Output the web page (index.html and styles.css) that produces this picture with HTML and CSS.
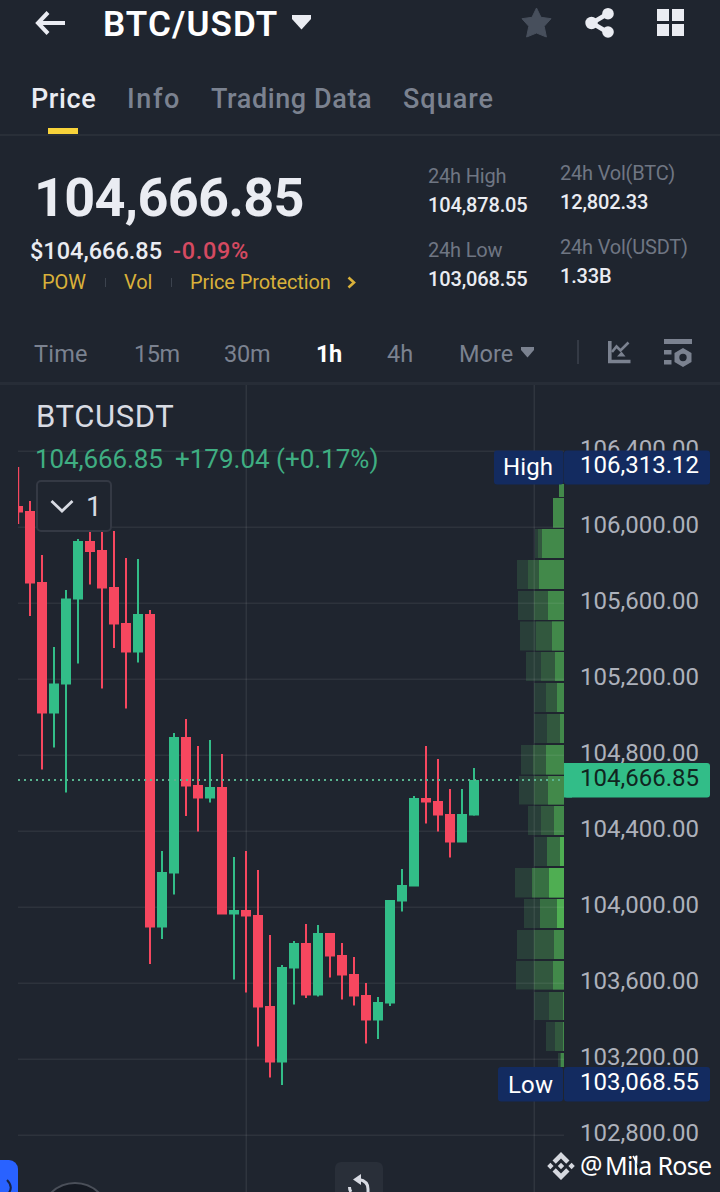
FILE: index.html
```html
<!DOCTYPE html>
<html lang="en">
<head>
    <meta charset="UTF-8">
    <meta name="viewport" content="width=device-width, initial-scale=1.0">
    <title>BTC/USDT</title>
    <link rel="stylesheet" href="styles.css">
</head>
<body>
    <header class="header">
        <svg class="back" width="30" height="24" viewBox="0 0 30 24">
            <path d="M13 1.5 L3 12 L13 22.5 M3.5 12 H30" fill="none" stroke="#eaecf2" stroke-width="4"/>
        </svg>
        <h1>BTC/USDT</h1>
        <svg class="caret" width="19" height="15" viewBox="0 0 19 15">
            <path d="M0 0 H19 V4 L9.5 14.5 L0 4 Z" fill="#eaecf2"/>
        </svg>
        <div class="actions">
            <svg width="31" height="31" viewBox="0 0 31 31">
                <path d="M15.5 1 L20 10.3 L30 11.7 L23.2 19.3 L25.4 30 L15.5 26 L5.6 30 L7.8 19.3 L1 11.7 L11 10.3 Z" fill="#474f5c" stroke="#474f5c" stroke-linejoin="round"/>
            </svg>
            <svg class="share" width="30" height="32" viewBox="0 0 30 32">
                <path d="M23 6.5 L7 16 L23 25.5" fill="none" stroke="#eaecf2" stroke-width="4.5"/>
                <circle cx="6.5" cy="16" r="6.2" fill="#eaecf2"/>
                <circle cx="23" cy="6.7" r="5.8" fill="#eaecf2"/>
                <circle cx="23" cy="25" r="5.8" fill="#eaecf2"/>
            </svg>
            <svg class="grid" width="27" height="27" viewBox="0 0 27 27">
                <path d="M0 0h12v12H0z M15 0h12v12H15z M0 15h12v12H0z M15 15h12v12H15z" fill="#eaecf2"/>
            </svg>
        </div>
    </header>

    <nav class="tabs">
        <a class="tab tab-price active">Price</a>
        <a class="tab tab-info">Info</a>
        <a class="tab tab-data">Trading Data</a>
        <a class="tab tab-square">Square</a>
    </nav>

    <section class="ticker">
        <div class="quote">
            <div class="last">104,666.85</div>
            <div class="fiat"><span>$104,666.85</span><span class="change">-0.09%</span></div>
            <div class="tags">
                <span class="tag-pow">POW</span><i></i><span class="tag-vol">Vol</span><i></i><span class="tag-protect">Price Protection</span>
                <svg width="9" height="13" viewBox="0 0 9 13"><path d="M1.5 1.5 L7 6.5 L1.5 11.5" fill="none" stroke="#d9b13a" stroke-width="2.6"/></svg>
            </div>
        </div>
        <dl class="stats">
            <dt>24h High</dt><dd>104,878.05</dd>
            <dt>24h Low</dt><dd>103,068.55</dd>
        </dl>
        <dl class="stats stats-vol">
            <dt>24h Vol(BTC)</dt><dd>12,802.33</dd>
            <dt>24h Vol(USDT)</dt><dd>1.33B</dd>
        </dl>
    </section>

    <div class="intervals">
        <span class="int-time">Time</span>
        <span class="int-15">15m</span>
        <span class="int-30">30m</span>
        <span class="int-1h active">1h</span>
        <span class="int-4h">4h</span>
        <span class="int-more">More</span>
        <svg class="more-caret" width="13" height="11" viewBox="0 0 13 11"><path d="M0 0H13V3L6.5 10.5L0 3Z" fill="#7b8290"/></svg>
        <i class="split"></i>
        <svg class="ind" width="23" height="23" viewBox="0 0 23 23">
            <path d="M1.8 0 V20.5 H22.5" fill="none" stroke="#7b8290" stroke-width="3.6"/>
            <path d="M4 11 L8.5 5.5 L12.5 9.5 L20.5 1.5" fill="none" stroke="#7b8290" stroke-width="2.6"/>
            <path d="M9 15.5 L13.5 10.5 L17.5 15.5 Z" fill="#7b8290"/>
        </svg>
        <svg class="settings" width="29" height="29" viewBox="0 0 29 29">
            <path d="M0 0h28v5H0z M0 11h7.5v4.5H0z M0 21h7.5v4.5H0z" fill="#7b8290"/>
            <path d="M19 9 L27.5 14 V23 L19 28 L10.5 23 V14 Z M19 14.8 A3.7 3.7 0 1 0 19 22.2 A3.7 3.7 0 1 0 19 14.8 Z" fill="#7b8290" fill-rule="evenodd"/>
        </svg>
    </div>

    <main class="chart">
        <svg id="chart" width="720" height="807" viewBox="0 385 720 807"></svg>
        <div class="legend">
            <div class="symbol">BTCUSDT</div>
            <div class="values"><span class="v-price">104,666.85</span><span class="v-diff">+179.04</span><span class="v-pct">(+0.17%)</span></div>
            <div class="toggle">
                <svg width="24" height="14" viewBox="0 0 24 14"><path d="M1.5 2 L12 12 L22.5 2" fill="none" stroke="#d8dbe3" stroke-width="2.8"/></svg>
                <span>1</span>
            </div>
        </div>
    </main>

    <script src="chart.js"></script>
</body>
</html>
```

FILE: styles.css
```css
* {
    box-sizing: border-box;
}
body {
    margin: 0;
    width: 720px;
    height: 1192px;
    overflow: hidden;
    background-color: #1f252f;
    color: #eaecf2;
    font-family: Roboto, "Noto Sans", sans-serif;
    white-space: nowrap;
}
h1, dl, dt, dd {
    margin: 0;
}
svg {
    display: block;
    flex: none;
}
.header {
    display: flex;
    align-items: center;
    height: 46px;
    padding: 0 36px 0 35px;
}
.back {
    margin-top: -1px;
}
.header h1 {
    width: 175px;
    margin-left: 38px;
    margin-top: 4px;
    font-size: 35px;
    line-height: 40px;
    font-weight: 600;
    letter-spacing: 1.1px;
    color: #fff;
}
.caret {
    margin-left: 14px;
    margin-top: -1px;
}
.actions {
    display: flex;
    align-items: center;
    margin-left: auto;
    margin-top: -1px;
}
.share {
    margin-left: 33px;
}
.grid {
    margin-left: 42px;
}
.tabs {
    display: flex;
    gap: 32px;
    height: 90px;
    padding: 36px 32px 0 31px;
    border-bottom: 2px solid #292f38;
    font-size: 27px;
    line-height: 34px;
    font-weight: 500;
    color: #7b8290;
}
.tab.active {
    position: relative;
    color: #eaecf2;
}
.tab.active::after {
    content: "";
    position: absolute;
    left: 17px;
    top: 46px;
    width: 30px;
    height: 6px;
    background-color: #f8d33a;
}
.tab-price { width: 64px; letter-spacing: 0.6px; }
.tab-info { width: 52px; letter-spacing: 1.6px; }
.tab-data { width: 160px; letter-spacing: 0.6px; }
.tab-square { letter-spacing: 1px; }
.ticker {
    display: flex;
    height: 189px;
    padding: 0 0 0 30px;
}
.quote {
    width: 398px;
    padding-top: 30px;
}
.last {
    padding-left: 4px;
    font-size: 54px;
    line-height: 64px;
    font-weight: 700;
    letter-spacing: -0.7px;
}
.fiat {
    display: flex;
    gap: 11px;
    margin-top: 7px;
    font-size: 23.5px;
    line-height: 28px;
    font-weight: 500;
}
.change {
    color: #d54a61;
    letter-spacing: 0.7px;
}
.tags {
    display: flex;
    align-items: center;
    margin-top: 4px;
    padding-left: 12px;
    font-size: 20px;
    line-height: 26px;
    letter-spacing: -0.1px;
    color: #d9b13a;
}
.tags i {
    width: 1px;
    height: 9px;
    background-color: #3c434e;
}
.tag-pow { width: 63px; }
.tag-vol { width: 47px; margin-left: 18px; }
.tag-protect { width: 157px; margin-left: 18px; }
.stats {
    width: 132px;
    padding-top: 27px;
}
.stats-vol {
    padding-top: 24px;
}
.stats dt {
    font-size: 20px;
    line-height: 27px;
    letter-spacing: -0.2px;
    color: #6f7683;
}
.stats dd {
    margin-bottom: 16px;
    font-size: 20px;
    line-height: 31px;
    font-weight: 500;
    letter-spacing: -0.15px;
}
.intervals {
    display: flex;
    align-items: center;
    height: 60px;
    padding: 1px 28px 0 34px;
    border-bottom: 3px solid #272d37;
    font-size: 23.5px;
    color: #7b8290;
}
.intervals .active {
    color: #fff;
    font-weight: 700;
}
.int-time { width: 100px; letter-spacing: 0.2px; }
.int-15 { width: 90px; letter-spacing: -0.4px; }
.int-30 { width: 92px; letter-spacing: -0.2px; }
.int-1h { width: 71px; letter-spacing: -0.6px; }
.int-4h { width: 72px; }
.int-more { width: 62px; }
.more-caret {
    margin-top: -3px;
}
.split {
    width: 2px;
    height: 24px;
    margin: -4px 29px 0 43px;
    background-color: #343a45;
}
.ind {
    margin-top: -3px;
}
.settings {
    margin-left: auto;
    margin-right: -1px;
    margin-top: -2px;
}
.chart {
    position: relative;
}
.legend {
    position: absolute;
    left: 35px;
    top: 13px;
}
.symbol {
    padding-left: 1px;
    font-size: 31px;
    line-height: 38px;
    letter-spacing: 0.6px;
    color: #d8dbe3;
}
.values {
    display: flex;
    font-size: 26px;
    line-height: 32px;
    margin-top: 7px;
    color: #3fae82;
}
.v-price { width: 140px; letter-spacing: -0.1px; }
.v-diff { width: 101px; }
.toggle {
    display: flex;
    align-items: center;
    gap: 12px;
    width: 76px;
    height: 52px;
    margin-top: 5px;
    margin-left: 1px;
    padding-left: 12px;
    border: 2px solid #343944;
    border-radius: 5px;
    background-color: #1f252f;
    font-size: 28px;
    color: #d8dbe3;
}
.axis {
    font-size: 24px;
    fill: #adb1bb;
}
.tag-text {
    font-size: 24px;
    fill: #fff;
}
.tag-last {
    font-size: 24px;
    fill: #10251f;
}
.watermark {
    font-family: "Noto Sans", sans-serif;
    font-size: 25px;
    fill: #fff;
}
```

FILE: chart.js
```js
const svg = document.getElementById('chart');
const UP = '#32bd88';
const DOWN = '#f6475f';

function add(tag, attrs, text) {
    const el = document.createElementNS('http://www.w3.org/2000/svg', tag);
    for (const key in attrs) {
        el.setAttribute(key, attrs[key]);
    }
    if (text) {
        el.textContent = text;
    }
    svg.appendChild(el);
}

function rect(x, y, width, height, fill, rx) {
    add('rect', { x, y, width, height, fill, rx: rx || 0 });
}

function label(x, y, width, cls, text) {
    add('text', { x, y, textLength: width, class: cls }, text);
}

// Volume profile rows: top, bottom, three left edges, strong colour flag
const profile = [
    [484, 497, 559, 559, 559], [498, 527.5, 553, 553, 553], [529, 558, 535, 538, 542],
    [560, 589, 517, 528, 539], [591, 620, 518, 534, 548], [621.5, 650.5, 520, 536, 552],
    [652, 681, 526, 541, 555], [683, 712, 534, 546, 557], [714, 743, 534, 547, 560],
    [745, 774.5, 521, 533, 546], [776, 804.5, 519, 534, 548], [806, 835, 528, 541, 554],
    [837, 866, 534, 547, 560, 1], [868, 897.5, 515, 532, 549, 1], [899, 928, 524, 540, 557, 1],
    [930, 959, 517, 534, 554], [961, 989.5, 516, 534, 553], [992, 1020, 534, 549, 563],
    [1022, 1051, 546, 555, 563], [1053, 1067, 558, 560, 561]
];
profile.forEach(([top, bottom, a, b, c, strong]) => {
    const h = bottom - top;
    rect(a, top, 564 - a, h, '#293f39');
    rect(b, top, 564 - b, h, strong ? '#376f42' : '#32583e');
    rect(c, top, 564 - c, h, strong ? '#4fae52' : '#42894a');
});

// Grid
for (let i = 0; i < 10; i++) {
    rect(18, 450.5 + i * 76, 546, 1.5, 'rgba(255,255,255,0.065)');
}
rect(245.5, 385, 1.5, 807, 'rgba(255,255,255,0.075)');
rect(533.5, 385, 1.5, 807, 'rgba(255,255,255,0.075)');

// Candles, 12px apart: direction, high, low, body top, body bottom
const candles = [
    [0, 501, 616, 511, 583.5], [0, 555, 769.5, 582, 713.5], [1, 647, 747.5, 683.5, 713.5],
    [1, 590, 792.5, 598.5, 684.5], [1, 539, 663.5, 541, 599.5], [0, 531, 584.5, 541, 552],
    [0, 531, 688.5, 550, 588.5], [0, 531, 648, 587, 624.5], [0, 558, 708.5, 623, 652.5],
    [1, 559, 662.5, 614, 652.5], [0, 610, 964, 614, 927.5], [1, 851, 939, 872, 927.5],
    [1, 733, 894.5, 737, 873.5], [0, 719, 816, 737, 786.5], [0, 746, 831.5, 785, 798.5],
    [1, 740, 802.5, 787, 798.5], [0, 754, 914, 787, 914.5], [1, 857, 979.5, 910, 914.5],
    [0, 851, 992.5, 910, 916.5], [0, 870, 1046.5, 915, 1007.5], [0, 935, 1077.5, 1006, 1062.5],
    [1, 965, 1085, 967, 1062.5], [1, 941, 1004.5, 943, 968.5], [0, 924, 998, 943, 995.5],
    [1, 925, 996.5, 933, 995.5], [0, 933, 977.5, 933, 956.5], [0, 943, 999.5, 955, 975.5],
    [0, 957, 1005.5, 974, 996.5], [0, 983, 1043.5, 995, 1020.5], [1, 997, 1039, 1002, 1020.5],
    [1, 900, 1006, 900, 1003.5], [1, 869, 911.5, 885, 901.5], [1, 796, 886, 798, 886.5],
    [0, 746, 823.5, 798, 802.5], [0, 759, 831.5, 801, 815.5], [0, 789, 857.5, 814, 842.5],
    [1, 789, 842, 814, 842.5], [1, 768, 815.5, 780, 815.5]
];
rect(18, 467, 1.2, 57, DOWN);
rect(18, 506, 5, 6.5, DOWN);
candles.forEach(([up, high, low, top, bottom], i) => {
    const x = 30 + i * 12;
    const color = up ? UP : DOWN;
    rect(x - 1, high, 2, low - high, color);
    rect(x - 5, top, 10, bottom - top, color);
});

// Last price line
add('path', { d: 'M18 780 H564', stroke: '#58b48f', 'stroke-width': 2, 'stroke-dasharray': '2 4' });

// Price axis
for (let i = 0; i < 10; i++) {
    label(580, 457 + i * 76, 119, 'axis', (106400 - i * 400).toLocaleString('en-US') + '.00');
}
rect(494, 450.5, 69.5, 34, '#132b60', 3);
rect(564, 450.5, 146, 34, '#132b60', 3);
label(503, 475, 50, 'tag-text', 'High');
label(580, 473.4, 119, 'tag-text', '106,313.12');
rect(564, 763, 146, 34.5, UP, 3);
rect(564, 763, 8, 34.5, UP);
label(580, 786.4, 119, 'tag-last', '104,666.85');
rect(498, 1067, 65, 34.5, '#132b60', 3);
rect(564, 1067, 146, 34.5, '#132b60', 3);
label(508, 1093, 45, 'tag-text', 'Low');
label(580, 1090.4, 119, 'tag-text', '103,068.55');

// Floating controls cut off by the bottom edge
rect(-8, 1160, 26, 60, '#2962ff', 9);
add('path', { d: 'M7 1180 Q14 1187 8 1194', fill: 'none', stroke: '#172344', 'stroke-width': 2 });
add('circle', { cx: 75, cy: 1217, r: 34, fill: '#141922', stroke: '#4a4f59', 'stroke-width': 2 });
rect(335, 1162, 48, 50, '#292f39', 6);
add('path', { d: 'M353 1179.5 L361 1174 L361 1185 Z', fill: '#d8dbe3' });
add('path', { d: 'M359 1179.5 Q368 1181 368 1189 V1192 M349.5 1187 Q349.5 1190 351 1192', fill: 'none', stroke: '#d8dbe3', 'stroke-width': 3 });

// Author mark
add('path', {
    d: 'M561 1152 L569.5 1160.5 L566.2 1163.8 L561 1158.6 L555.8 1163.8 L552.5 1160.5 Z' +
        'M561 1180 L569.5 1171.5 L566.2 1168.2 L561 1173.4 L555.8 1168.2 L552.5 1171.5 Z' +
        'M561 1162.8 L564.2 1166 L561 1169.2 L557.8 1166 Z' +
        'M550.4 1162.8 L553.6 1166 L550.4 1169.2 L547.2 1166 Z' +
        'M571.6 1162.8 L574.8 1166 L571.6 1169.2 L568.4 1166 Z',
    fill: '#d5d8df'
});
label(580, 1174, 20, 'watermark', '@');
label(605, 1175, 107, 'watermark', 'Mila Rose');
add('path', { d: 'M636.5 1156 L638 1168', stroke: '#12161f', 'stroke-width': 1.5 });
add('path', { d: 'M633 1156 L636.5 1162 V1155.5', fill: 'none', stroke: '#fff', 'stroke-width': 1.6 });
```
